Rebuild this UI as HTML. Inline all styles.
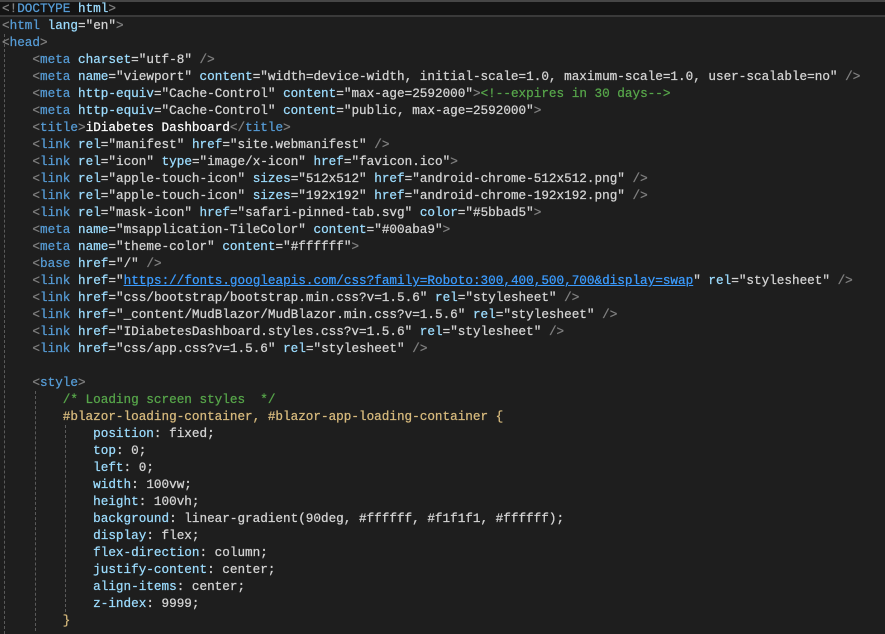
<!DOCTYPE html>
<html><head><style>
body{margin:0;width:885px;height:631px;background:#1e1e1e;overflow:hidden;position:relative}
pre{margin:0;position:absolute;left:2px;top:0;font-family:"Liberation Mono",monospace;font-size:12.67px;line-height:17px;color:#d4d4d4;white-space:pre;-webkit-text-stroke:0.25px}
.hl{position:absolute;left:0;top:0;width:885px;height:13px;background:#141414;border-top:2px solid #464646;border-bottom:2px solid #3a3a3a}
.g{position:absolute;width:0;border-left:1px dashed #5a5a5a}
.p{color:#808080}.t{color:#569cd6}.a{color:#9cdcfe}.s{color:#d4d4d4}.c{color:#57a64a}.u{color:#3b9cff;text-decoration:underline}
.sel{color:#d7ba7d}.w{color:#ffffff}
</style></head><body>
<div class="hl"></div>
<div class="g" style="left:4px;top:34px;height:600px"></div>
<div class="g" style="left:35px;top:391px;height:240px"></div>
<div class="g" style="left:65px;top:425px;height:187px"></div>
<pre><span class="p">&lt;!</span><span class="t">DOCTYPE</span> <span class="a">html</span><span class="p">&gt;</span>
<span class="p">&lt;</span><span class="t">html</span> <span class="a">lang</span>=<span class="s">"en"</span><span class="p">&gt;</span>
<span class="p">&lt;</span><span class="t">head</span><span class="p">&gt;</span>
    <span class="p">&lt;</span><span class="t">meta</span> <span class="a">charset</span>="utf-8" <span class="p">/&gt;</span>
    <span class="p">&lt;</span><span class="t">meta</span> <span class="a">name</span>="viewport" <span class="a">content</span>="width=device-width, initial-scale=1.0, maximum-scale=1.0, user-scalable=no" <span class="p">/&gt;</span>
    <span class="p">&lt;</span><span class="t">meta</span> <span class="a">http-equiv</span>="Cache-Control" <span class="a">content</span>="max-age=2592000"<span class="p">&gt;</span><span class="c">&lt;!--expires in 30 days--&gt;</span>
    <span class="p">&lt;</span><span class="t">meta</span> <span class="a">http-equiv</span>="Cache-Control" <span class="a">content</span>="public, max-age=2592000"<span class="p">&gt;</span>
    <span class="p">&lt;</span><span class="t">title</span><span class="p">&gt;</span><span class="w">iDiabetes Dashboard</span><span class="p">&lt;/</span><span class="t">title</span><span class="p">&gt;</span>
    <span class="p">&lt;</span><span class="t">link</span> <span class="a">rel</span>="manifest" <span class="a">href</span>="site.webmanifest" <span class="p">/&gt;</span>
    <span class="p">&lt;</span><span class="t">link</span> <span class="a">rel</span>="icon" <span class="a">type</span>="image/x-icon" <span class="a">href</span>="favicon.ico"<span class="p">&gt;</span>
    <span class="p">&lt;</span><span class="t">link</span> <span class="a">rel</span>="apple-touch-icon" <span class="a">sizes</span>="512x512" <span class="a">href</span>="android-chrome-512x512.png" <span class="p">/&gt;</span>
    <span class="p">&lt;</span><span class="t">link</span> <span class="a">rel</span>="apple-touch-icon" <span class="a">sizes</span>="192x192" <span class="a">href</span>="android-chrome-192x192.png" <span class="p">/&gt;</span>
    <span class="p">&lt;</span><span class="t">link</span> <span class="a">rel</span>="mask-icon" <span class="a">href</span>="safari-pinned-tab.svg" <span class="a">color</span>="#5bbad5"<span class="p">&gt;</span>
    <span class="p">&lt;</span><span class="t">meta</span> <span class="a">name</span>="msapplication-TileColor" <span class="a">content</span>="#00aba9"<span class="p">&gt;</span>
    <span class="p">&lt;</span><span class="t">meta</span> <span class="a">name</span>="theme-color" <span class="a">content</span>="#ffffff"<span class="p">&gt;</span>
    <span class="p">&lt;</span><span class="t">base</span> <span class="a">href</span>="/" <span class="p">/&gt;</span>
    <span class="p">&lt;</span><span class="t">link</span> <span class="a">href</span>="<span class="u">https://fonts.googleapis.com/css?family=Roboto:300,400,500,700&amp;display=swap</span>" <span class="a">rel</span>="stylesheet" <span class="p">/&gt;</span>
    <span class="p">&lt;</span><span class="t">link</span> <span class="a">href</span>="css/bootstrap/bootstrap.min.css?v=1.5.6" <span class="a">rel</span>="stylesheet" <span class="p">/&gt;</span>
    <span class="p">&lt;</span><span class="t">link</span> <span class="a">href</span>="_content/MudBlazor/MudBlazor.min.css?v=1.5.6" <span class="a">rel</span>="stylesheet" <span class="p">/&gt;</span>
    <span class="p">&lt;</span><span class="t">link</span> <span class="a">href</span>="IDiabetesDashboard.styles.css?v=1.5.6" <span class="a">rel</span>="stylesheet" <span class="p">/&gt;</span>
    <span class="p">&lt;</span><span class="t">link</span> <span class="a">href</span>="css/app.css?v=1.5.6" <span class="a">rel</span>="stylesheet" <span class="p">/&gt;</span>

    <span class="p">&lt;</span><span class="t">style</span><span class="p">&gt;</span>
        <span class="c">/* Loading screen styles  */</span>
        <span class="sel">#blazor-loading-container, #blazor-app-loading-container {</span>
            <span class="a">position</span>: fixed;
            <span class="a">top</span>: 0;
            <span class="a">left</span>: 0;
            <span class="a">width</span>: 100vw;
            <span class="a">height</span>: 100vh;
            <span class="a">background</span>: linear-gradient(90deg, #ffffff, #f1f1f1, #ffffff);
            <span class="a">display</span>: flex;
            <span class="a">flex-direction</span>: column;
            <span class="a">justify-content</span>: center;
            <span class="a">align-items</span>: center;
            <span class="a">z-index</span>: 9999;
        <span class="sel">}</span></pre>
</body></html>
